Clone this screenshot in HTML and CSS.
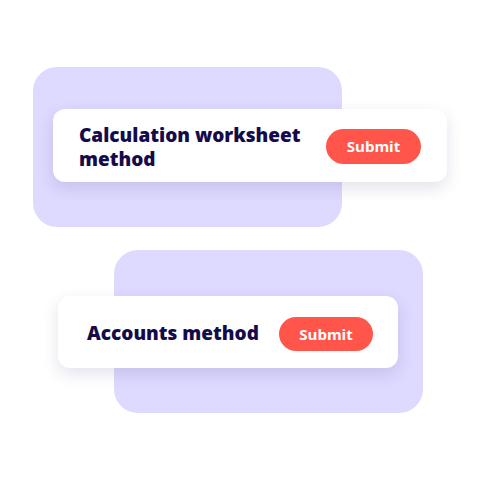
FILE: index.html
```html
<!DOCTYPE html>
<html lang="en">
<head>
<meta charset="utf-8">
<link rel="stylesheet" href="styles.css">
</head>
<body>
  <div class="scene">
    <div class="group group-one">
      <div class="backdrop"></div>
      <div class="card">
        <span class="title">Calculation worksheet<br>method</span>
        <button class="submit">Submit</button>
      </div>
    </div>
    <div class="group group-two">
      <div class="backdrop"></div>
      <div class="card">
        <span class="title">Accounts method</span>
        <button class="submit">Submit</button>
      </div>
    </div>
  </div>
</body>
</html>
```
FILE: styles.css
```css
html, body {
  margin: 0;
  padding: 0;
  background: #ffffff;
}
body {
  width: 480px;
  height: 480px;
  overflow: hidden;
  font-family: "Open Sans", "Noto Sans", sans-serif;
}
.scene {
  display: flex;
  flex-direction: column;
  padding-top: 67px;
}
.group {
  display: grid;
}
.group-one {
  margin-left: 33px;
  grid-template-columns: 20px 289px 105px;
  grid-template-rows: 42px 73px 45px;
}
.group-two {
  margin-top: 23px;
  margin-left: 58px;
  grid-template-columns: 56px 284px 25px;
  grid-template-rows: 46px 72px 45px;
}
.backdrop {
  background: #ddd9ff;
  border-radius: 24px;
}
.group-one .backdrop {
  grid-column: 1 / 3;
  grid-row: 1 / 4;
}
.group-two .backdrop {
  grid-column: 2 / 4;
  grid-row: 1 / 4;
}
.card {
  background: #ffffff;
  border-radius: 12px;
  box-shadow: 0 6px 16px rgba(60, 50, 120, 0.14);
  display: flex;
  align-items: center;
  justify-content: space-between;
  z-index: 1;
}
.group-one .card {
  grid-column: 2 / 4;
  grid-row: 2 / 3;
  padding: 0 26px 0 26px;
}
.group-two .card {
  grid-column: 1 / 3;
  grid-row: 2 / 3;
  padding: 0 25px 0 29px;
}
.title {
  color: #150b4b;
  font-weight: 800;
  font-size: 19px;
  line-height: 24px;
  margin-top: 2px;
}
.submit {
  border: none;
  background: #ff554b;
  color: #ffffff;
  font-family: "Open Sans", "Noto Sans", sans-serif;
  font-weight: 700;
  font-size: 15px;
  height: 35px;
  width: 95px;
  border-radius: 18px;
  padding: 0;
  margin-top: 1px;
}
.group-two .submit {
  width: 94px;
  height: 34px;
  margin-top: 3px;
}
```
